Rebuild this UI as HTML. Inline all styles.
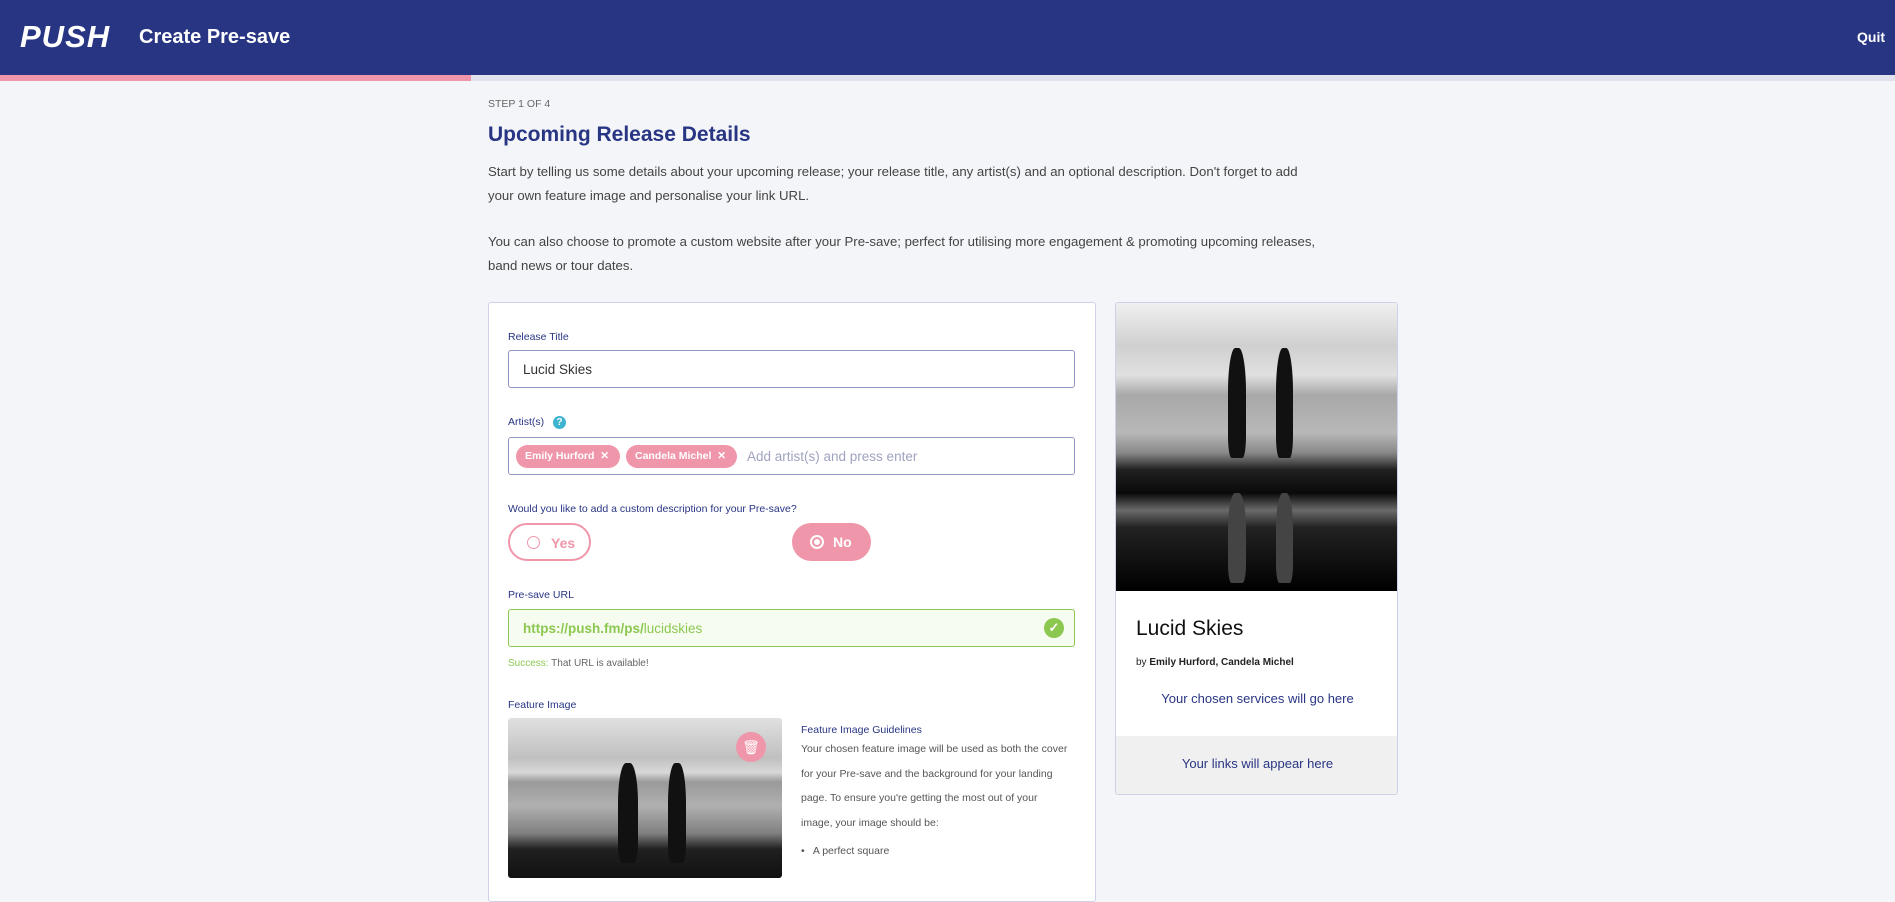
<!DOCTYPE html>
<html><head><meta charset="utf-8"><style>
*{box-sizing:border-box;margin:0;padding:0}
body{width:1895px;height:862px;overflow:hidden;background:#f4f5f9;font-family:"Liberation Sans",sans-serif;position:relative;color:#3a3a4a}
.hdr{position:absolute;left:0;top:0;width:1895px;height:75px;background:#283583}
.logo{position:absolute;left:20px;top:19px;color:#fff;font-size:31px;font-weight:bold;font-style:italic;letter-spacing:1px}
.ttl{position:absolute;left:139px;top:26px;color:#fff;font-size:20px;font-weight:bold}
.quit{position:absolute;right:10px;top:29px;color:#fff;font-size:14px;font-weight:bold}
.prog{position:absolute;left:0;top:75px;width:1895px;height:6px;background:#e1e2ee}
.prog div{width:471px;height:6px;background:#f096aa}
.a{position:absolute}
.step{left:488px;top:98px;font-size:10.5px;color:#666}
h1{position:absolute;left:488px;top:123px;font-size:21px;color:#283583;font-weight:bold}
.p{left:488px;width:920px;font-size:13.2px;line-height:24px;color:#444}
.card{position:absolute;left:488px;top:302px;width:608px;height:600px;background:#fff;border:1px solid #cfd2e6;border-radius:3px}
.lbl{position:absolute;left:508px;font-size:10.5px;color:#283583}
.inp{position:absolute;left:508px;width:567px;height:38px;border:1px solid #9095c2;border-radius:3px;background:#fff}
.tag{position:absolute;top:7px;height:23px;background:#f096aa;color:#fff;border-radius:12px;font-size:10.5px;font-weight:bold;line-height:23px;padding-left:9px}
.btn{position:absolute;top:523px;height:38px;border-radius:19px;font-size:14px;font-weight:bold;line-height:36px}
.rc{position:absolute;left:1115px;top:302px;width:283px;height:493px;background:#fff;border:1px solid #cfd2e6;border-radius:3px;overflow:hidden}
.photo{position:absolute;overflow:hidden;background:linear-gradient(#f0f0f0 0%,#d0d0d0 15%,#e0e0e0 25%,#a8a8a8 32%,#b8b8b8 45%,#888 52%,#202020 58%,#0a0a0a 66%,#6a6a6a 72%,#222 78%,#000 100%)}
.fig{position:absolute;background:#111;border-radius:40% 40% 20% 20%}
</style></head><body>
<div class="hdr"><div class="logo">PUSH</div><div class="ttl">Create Pre-save</div><div class="quit">Quit</div></div>
<div class="prog"><div></div></div>
<div class="a step">STEP 1 OF 4</div>
<h1>Upcoming Release Details</h1>
<div class="a p" style="top:160px">Start by telling us some details about your upcoming release; your release title, any artist(s) and an optional description. Don't forget to add<br>your own feature image and personalise your link URL.</div>
<div class="a p" style="top:230px">You can also choose to promote a custom website after your Pre-save; perfect for utilising more engagement &amp; promoting upcoming releases,<br>band news or tour dates.</div>

<div class="card"></div>
<div class="lbl" style="top:331px">Release Title</div>
<div class="inp" style="top:350px"><span style="position:absolute;left:14px;top:11px;font-size:13.5px;color:#333">Lucid Skies</span></div>
<div class="lbl" style="top:416px">Artist(s) <span style="display:inline-block;width:13px;height:13px;border-radius:50%;background:#3cb4cf;color:#fff;font-size:10px;text-align:center;line-height:13px;margin-left:6px;font-weight:bold">?</span></div>
<div class="inp" style="top:437px">
<div class="tag" style="left:7px;width:104px">Emily Hurford &nbsp;✕</div>
<div class="tag" style="left:117px;width:111px">Candela Michel &nbsp;✕</div>
<span style="position:absolute;left:238px;top:11px;font-size:13.5px;color:#a0a3c0">Add artist(s) and press enter</span></div>
<div class="lbl" style="top:503px">Would you like to add a custom description for your Pre-save?</div>
<div class="btn" style="left:508px;width:83px;border:2px solid #f096aa;color:#f096aa;background:#fff"><span style="position:absolute;left:17px;top:11px;width:13px;height:13px;border:1.5px solid #f096aa;border-radius:50%"></span><span style="position:absolute;left:41px">Yes</span></div>
<div class="btn" style="left:792px;width:79px;background:#f096aa;color:#fff"><span style="position:absolute;left:18px;top:12px;width:14px;height:14px;border:2px solid #fff;border-radius:50%"><span style="position:absolute;left:2px;top:2px;width:6px;height:6px;background:#fff;border-radius:50%"></span></span><span style="position:absolute;left:41px;top:1px">No</span></div>
<div class="lbl" style="top:589px">Pre-save URL</div>
<div class="inp" style="top:609px;border-color:#8cc850;background:#f7fcf1"><span style="position:absolute;left:14px;top:11px;font-size:13.5px;color:#8cc850"><b>https://push.fm/ps/</b>lucidskies</span><span style="position:absolute;right:10px;top:8px;width:20px;height:20px;border-radius:50%;background:#8cc850;color:#fff;font-size:13px;text-align:center;line-height:20px;font-weight:bold">✓</span></div>
<div class="lbl" style="top:658px;font-size:10px;color:#666"><span style="color:#8cc850">Success:</span> That URL is available!</div>
<div class="lbl" style="top:699px">Feature Image</div>
<div class="photo" style="left:508px;top:718px;width:274px;height:160px;border-radius:3px;background:linear-gradient(#e0e0e0 0%,#c0c0c0 25%,#d8d8d8 34%,#9a9a9a 40%,#b0b0b0 55%,#808080 72%,#202020 82%,#111 100%)">
<div class="fig" style="left:110px;top:45px;width:20px;height:100px"></div>
<div class="fig" style="left:160px;top:45px;width:18px;height:100px"></div>
<div style="position:absolute;left:228px;top:14px;width:30px;height:30px;border-radius:50%;background:#f096aa;color:#fff;font-size:14px;text-align:center;line-height:30px">🗑</div></div>
<div class="a" style="left:801px;top:724px;font-size:10.5px;color:#283583">Feature Image Guidelines</div>
<div class="a" style="left:801px;top:737px;width:270px;font-size:10.5px;line-height:24.5px;color:#555">Your chosen feature image will be used as both the cover for your Pre-save and the background for your landing page. To ensure you're getting the most out of your image, your image should be:</div>
<div class="a" style="left:801px;top:845px;font-size:10.5px;color:#555">•&nbsp;&nbsp; A perfect square</div>

<div class="rc">
<div class="photo" style="left:0;top:0;width:283px;height:288px">
<div class="fig" style="left:112px;top:45px;width:18px;height:110px"></div>
<div class="fig" style="left:160px;top:45px;width:17px;height:110px"></div>
<div class="fig" style="left:112px;top:190px;width:18px;height:90px;background:#444"></div>
<div class="fig" style="left:160px;top:190px;width:17px;height:90px;background:#444"></div>
</div>
<div style="position:absolute;left:20px;top:314px;font-size:21px;color:#111">Lucid Skies</div>
<div style="position:absolute;left:20px;top:354px;font-size:10px;color:#222">by <b>Emily Hurford, Candela Michel</b></div>
<div style="position:absolute;left:0;width:283px;top:388px;text-align:center;font-size:13px;color:#283583">Your chosen services will go here</div>
<div style="position:absolute;left:0;top:433px;width:283px;height:60px;background:#f0f0f0;text-align:center;font-size:13px;color:#283583;line-height:56px">Your links will appear here</div>
</div>
</body></html>
